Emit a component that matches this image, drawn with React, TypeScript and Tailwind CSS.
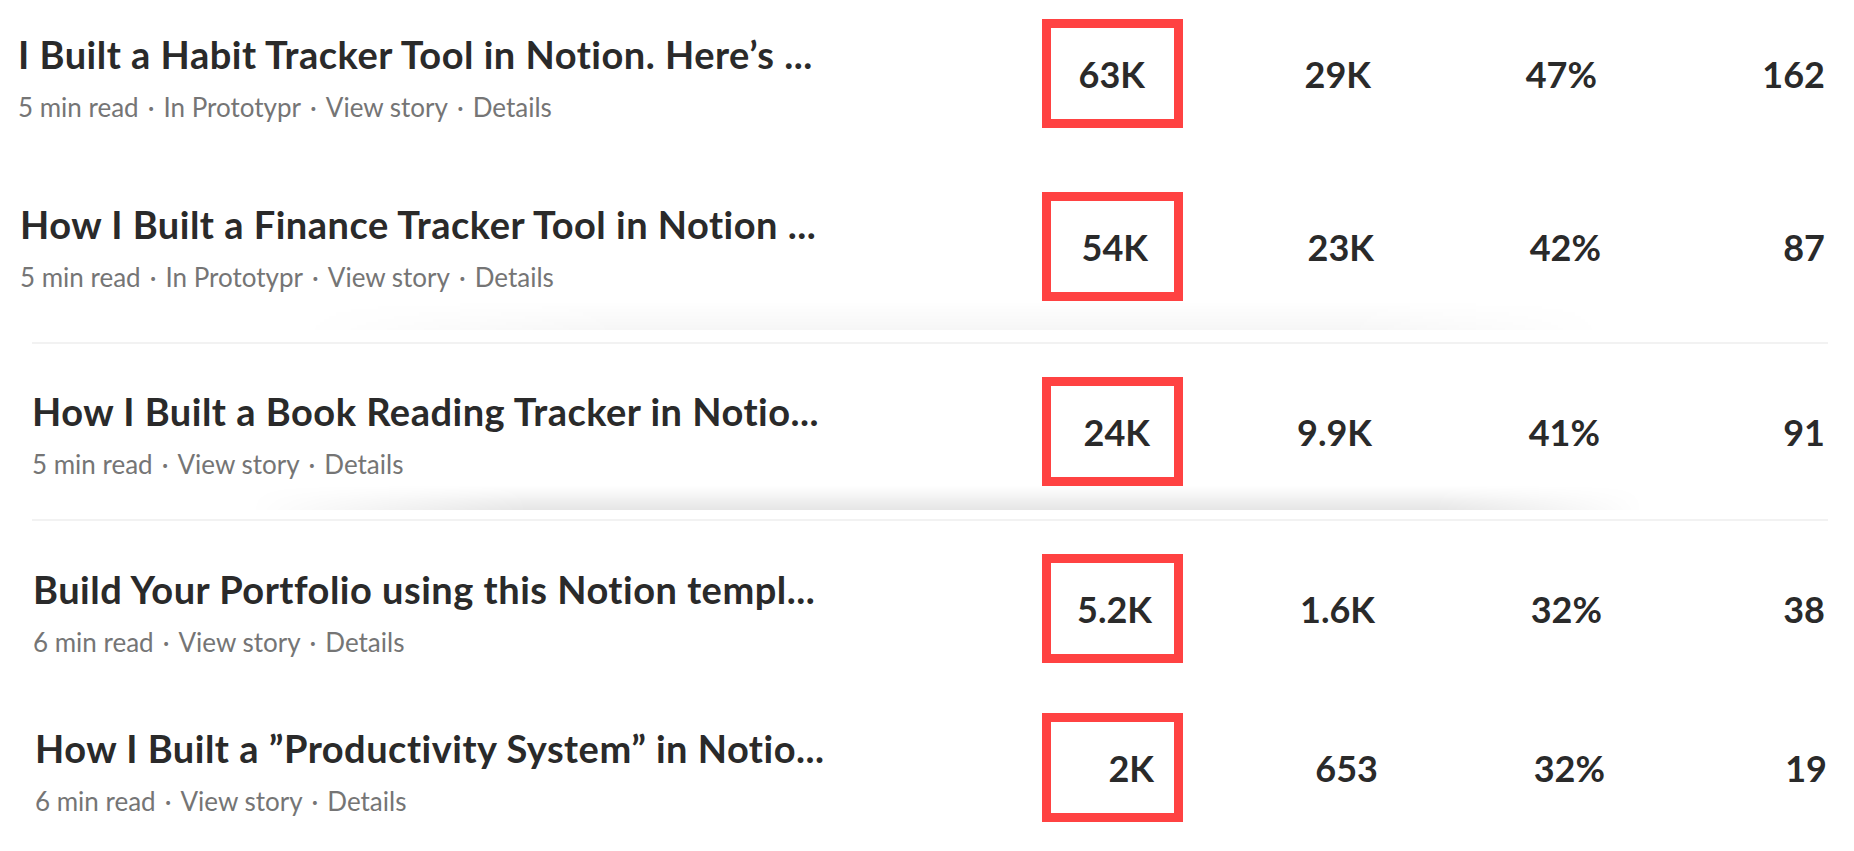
import React from "react";

type Row = {
  title: string;
  meta: string[];
  views: string;
  reads: string;
  ratio: string;
  fans: string;
  pl: string;
  pt: string;
  pr: string;
  boxPr: string;
  w2: string;
  w3: string;
  w4: string;
};

const rows: Row[] = [
  {
    title: "I Built a Habit Tracker Tool in Notion. Here\u2019s ...",
    meta: ["5 min read", "In Prototypr", "View story", "Details"],
    views: "63K",
    reads: "29K",
    ratio: "47%",
    fans: "162",
    pl: "pl-[18px]",
    pt: "pt-[15px]",
    pr: "pr-[29px]",
    boxPr: "pr-[29px]",
    w2: "w-[188px]",
    w3: "w-[226px]",
    w4: "w-[228px]",
  },
  {
    title: "How I Built a Finance Tracker Tool in Notion ...",
    meta: ["5 min read", "In Prototypr", "View story", "Details"],
    views: "54K",
    reads: "23K",
    ratio: "42%",
    fans: "87",
    pl: "pl-[20px]",
    pt: "pt-[12px]",
    pr: "pr-[29px]",
    boxPr: "pr-[26px]",
    w2: "w-[191px]",
    w3: "w-[227px]",
    w4: "w-[224px]",
  },
  {
    title: "How I Built a Book Reading Tracker in Notio...",
    meta: ["5 min read", "View story", "Details"],
    views: "24K",
    reads: "9.9K",
    ratio: "41%",
    fans: "91",
    pl: "pl-[32px]",
    pt: "pt-[14px]",
    pr: "pr-[29px]",
    boxPr: "pr-[24px]",
    w2: "w-[189px]",
    w3: "w-[228px]",
    w4: "w-[225px]",
  },
  {
    title: "Build Your Portfolio using this Notion templ...",
    meta: ["6 min read", "View story", "Details"],
    views: "5.2K",
    reads: "1.6K",
    ratio: "32%",
    fans: "38",
    pl: "pl-[33px]",
    pt: "pt-[15px]",
    pr: "pr-[29px]",
    boxPr: "pr-[22px]",
    w2: "w-[192px]",
    w3: "w-[227px]",
    w4: "w-[223px]",
  },
  {
    title: "How I Built a \u201DProductivity System\u201D in Notio...",
    meta: ["6 min read", "View story", "Details"],
    views: "2K",
    reads: "653",
    ratio: "32%",
    fans: "19",
    pl: "pl-[35px]",
    pt: "pt-[15px]",
    pr: "pr-[27px]",
    boxPr: "pr-[20px]",
    w2: "w-[195px]",
    w3: "w-[227px]",
    w4: "w-[222px]",
  },
];

function StatRow({ r, className }: { r: Row; className: string }) {
  return (
    <div className={`flex h-[109px] items-start ${r.pr} ${className}`}>
      <div className={`min-w-0 flex-1 ${r.pl} ${r.pt}`}>
        <div className="whitespace-nowrap text-[38px] font-bold leading-[40px] tracking-[0.5px] text-[#2a2a2a]">
          {r.title}
        </div>
        <div className="mt-[17px] flex items-center whitespace-nowrap text-[26px] leading-[32px] text-[#757575]">
          {r.meta.map((m, i) => (
            <React.Fragment key={m}>
              {i > 0 && <span className="px-[9px]">·</span>}
              <span>{m}</span>
            </React.Fragment>
          ))}
        </div>
      </div>
      <div
        className={`flex h-[109px] w-[141px] shrink-0 items-center justify-end border-[9px] border-[#ff4242] text-[36px] font-bold text-[#2a2a2a] ${r.boxPr}`}
      >
        {r.views}
      </div>
      <div
        className={`flex h-[109px] shrink-0 items-center justify-end text-[36px] font-bold text-[#2a2a2a] ${r.w2}`}
      >
        {r.reads}
      </div>
      <div
        className={`flex h-[109px] shrink-0 items-center justify-end text-[36px] font-bold text-[#2a2a2a] ${r.w3}`}
      >
        {r.ratio}
      </div>
      <div
        className={`flex h-[109px] shrink-0 items-center justify-end text-[36px] font-bold text-[#2a2a2a] ${r.w4}`}
      >
        {r.fans}
      </div>
    </div>
  );
}

export default function App() {
  return (
    <div
      className="h-[851px] w-[1854px] overflow-hidden bg-white"
      style={{ fontFamily: "Lato, 'Open Sans', sans-serif" }}
    >
      <StatRow r={rows[0]} className="mt-[19px]" />
      <StatRow r={rows[1]} className="mt-[64px]" />
      <div className="h-[41px] pl-[296px] pr-[247px]">
        <div className="h-[29px] bg-[linear-gradient(to_bottom,rgba(0,0,0,0),rgba(0,0,0,0.035))] [mask-image:linear-gradient(to_right,transparent,black_25%,black_80%,transparent)]" />
      </div>
      <div className="ml-[32px] mr-[26px] h-[2px] bg-[#f2f2f2]" />
      <StatRow r={rows[2]} className="mt-[33px]" />
      <div className="h-[33px] pl-[250px] pr-[210px]">
        <div className="h-[24px] bg-[linear-gradient(to_bottom,rgba(0,0,0,0),rgba(0,0,0,0.1))] [mask-image:linear-gradient(to_right,transparent,black_20%,black_85%,transparent)]" />
      </div>
      <div className="ml-[32px] mr-[26px] h-[2px] bg-[#f2f2f2]" />
      <StatRow r={rows[3]} className="mt-[33px]" />
      <StatRow r={rows[4]} className="mt-[50px]" />
    </div>
  );
}
